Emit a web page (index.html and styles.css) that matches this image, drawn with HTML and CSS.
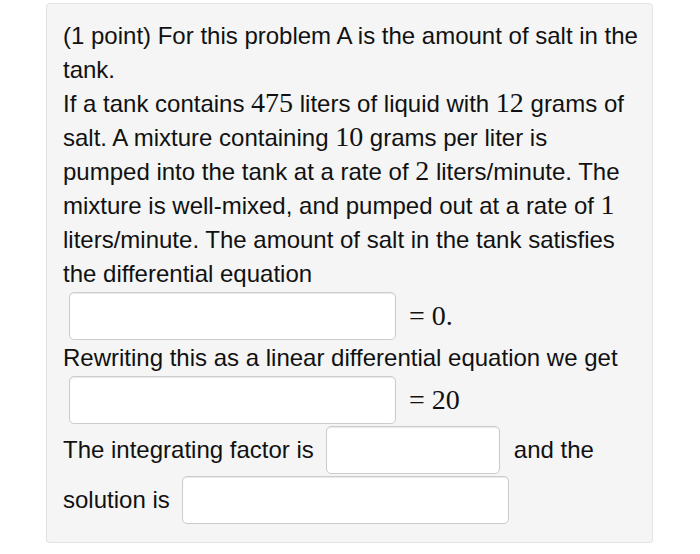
FILE: index.html
```html
<!DOCTYPE html>
<html>
<head>
<meta charset="utf-8">
<link rel="stylesheet" href="styles.css">
</head>
<body>
<div class="problem">
  <p class="text">(1 point) For this problem A is the amount of salt in the<br>tank.<br>If a tank contains <span class="m">475</span> liters of liquid with <span class="m">12</span> grams of<br>salt. A mixture containing <span class="m">10</span> grams per liter is<br>pumped into the tank at a rate of <span class="m">2</span> liters/minute. The<br>mixture is well-mixed, and pumped out at a rate of <span class="m">1</span><br>liters/minute. The amount of salt in the tank satisfies<br>the differential equation</p>
  <div class="row"><span class="ans wide"></span><span class="m eq">= 0.</span></div>
  <p class="text">Rewriting this as a linear differential equation we get</p>
  <div class="row"><span class="ans wide"></span><span class="m eq">= 20</span></div>
  <div class="row"><span>The integrating factor is</span><span class="ans narrow"></span><span class="after">and the</span></div>
  <div class="row"><span>solution is</span><span class="ans wide"></span></div>
</div>
</body>
</html>
```

FILE: styles.css
```css
html, body {
  margin: 0;
  padding: 0;
  background: #ffffff;
}
body {
  font-family: "Liberation Sans", Arial, sans-serif;
  font-size: 24px;
  color: #111111;
}
.problem {
  box-sizing: border-box;
  width: 607px;
  margin: 3px 0 0 46px;
  padding: 15px 16px 17px 16px;
  background: #f5f5f5;
  border: 1px solid #e3e3e3;
  border-radius: 4px;
  box-shadow: 0 1px 1px rgba(0,0,0,0.05);
}
.text {
  margin: 0;
  line-height: 34px;
  white-space: nowrap;
}
.m {
  font-family: "Liberation Serif", "Times New Roman", serif;
  font-size: 28px;
  line-height: 0;
}
.row {
  display: flex;
  align-items: center;
  padding: 1px 0;
  line-height: 34px;
}
.ans {
  box-sizing: border-box;
  display: inline-block;
  flex: none;
  height: 48px;
  background: #ffffff;
  border: 1px solid #cccccc;
  border-radius: 5px;
  box-shadow: inset 0 1px 1px rgba(0,0,0,0.09);
  margin: 0 12px;
}
.row .ans:first-child {
  margin-left: 6px;
}
.wide {
  width: 327px;
}
.narrow {
  width: 174px;
}
.eq {
  line-height: 34px;
  margin-left: 1px;
}
.after {
  margin-left: 2px;
}
```
